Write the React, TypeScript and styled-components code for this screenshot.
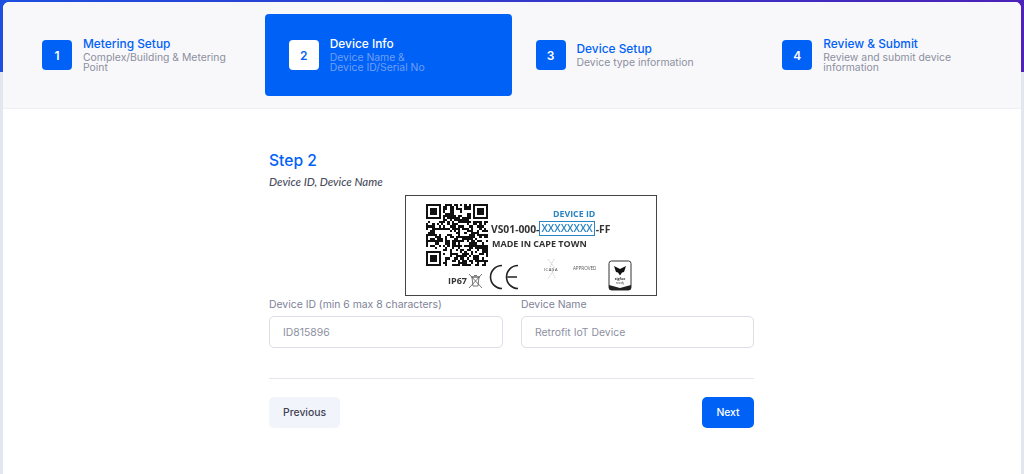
import styled, { createGlobalStyle } from "styled-components";

const GlobalStyle = createGlobalStyle`
    html, body {
        margin: 0;
        padding: 0;
        height: 100%;
        overflow: hidden;
    }

    body {
        background-color: #e4e6ef;
        font-family: "Inter", "Liberation Sans", sans-serif;
    }

    * {
        box-sizing: border-box;
    }
`;

const Page = styled.div`
    height: 474px;
    padding: 2px 3px 0;
    background: linear-gradient(90deg, #1d4fe0 0%, #4c22b8 100%) top / 100% 72px no-repeat;
`;

const Card = styled.div`
    height: 472px;
    border-radius: 6px 6px 0 0;
    overflow: hidden;
    background-color: #ffffff;
`;

const Stepper = styled.div`
    height: 107px;
    padding: 12px 16px 12px 15px;
    display: grid;
    grid-template-columns: repeat(4, 1fr);
    background-color: #f8f8fa;
    border-bottom: 1px solid #eef0f5;
`;

const Step = styled.div<{ $active?: boolean }>`
    display: flex;
    align-items: center;
    gap: 11px;
    padding-left: 24px;
    border-radius: 4px;
    background-color: ${props => (props.$active ? "#0061f7" : "transparent")};
`;

const StepNumber = styled.div<{ $active?: boolean }>`
    flex: none;
    width: 30px;
    height: 30px;
    border-radius: 4px;
    display: flex;
    align-items: center;
    justify-content: center;
    font-size: 12px;
    font-weight: 600;
    color: ${props => (props.$active ? "#0061f7" : "#ffffff")};
    background-color: ${props => (props.$active ? "#ffffff" : "#0061f7")};
`;

const StepText = styled.div`
    width: 160px;
    margin-top: -1px;
`;

const StepTitle = styled.div<{ $active?: boolean }>`
    font-size: 11.9px;
    font-weight: 500;
    line-height: 14px;
    margin-bottom: 2px;
    color: ${props => (props.$active ? "#ffffff" : "#0061f7")};
`;

const StepInfo = styled.div<{ $active?: boolean }>`
    font-size: 10.4px;
    line-height: 10px;
    white-space: pre-line;
    color: ${props => (props.$active ? "#6f9ff5" : "#8c8f9f")};
`;

const Form = styled.div`
    width: 485px;
    margin-left: 266px;
    padding-top: 42px;
`;

const Heading = styled.h2`
    margin: 0;
    font-size: 15.6px;
    font-weight: 500;
    line-height: 20px;
    color: #0061f7;
`;

const Hint = styled.div`
    margin-top: 5px;
    font-family: "Lato", "Liberation Sans", sans-serif;
    font-size: 11.4px;
    font-style: italic;
    font-weight: 500;
    line-height: 12px;
    color: #4a4d5c;
`;

const LabelPlate = styled.div`
    width: 252px;
    height: 101px;
    margin: 7px 0 0 136px;
    padding: 8px 0 0 20px;
    display: grid;
    grid-template-columns: 62px 1fr;
    grid-template-rows: 62px 1fr;
    column-gap: 3px;
    background-color: #ffffff;
    border: 1px solid #444444;
`;

const QrSvg = styled.svg`
    filter: blur(0.3px);
`;

const PrintLines = styled.div`
    display: flex;
    flex-direction: column;
    align-items: flex-start;
    padding-top: 4px;
    font-family: "Open Sans", "Liberation Sans", sans-serif;
    font-size: 10.3px;
    font-weight: 700;
    color: #333333;
    filter: blur(0.3px);
`;

const IdCaption = styled.div`
    margin-left: 62px;
    font-size: 8.8px;
    line-height: 13px;
    color: #2a85c4;
`;

const SerialLine = styled.div`
    display: flex;
    align-items: center;
    line-height: 14px;
    white-space: nowrap;
`;

const SerialBox = styled.span`
    padding: 0 1px;
    line-height: 13px;
    font-weight: 600;
    color: #2a85c4;
    border: 1px solid #2a85c4;
    margin-right: 1px;
`;

const MadeIn = styled.div`
    margin: 2px 0 0 1px;
    line-height: 12px;
    font-size: 9px;
`;

const MarksRow = styled.div`
    grid-column: 1 / 3;
    height: 28px;
    padding: 0 24px 0 2px;
    display: flex;
    align-items: flex-start;
    font-family: "Open Sans", "Liberation Sans", sans-serif;
    color: #333333;
    filter: blur(0.3px);
`;

const Rating = styled.span`
    margin: 9px 1px 0 20px;
    font-size: 9px;
    font-weight: 700;
    line-height: 11px;
`;

const BinSvg = styled.svg`
    margin-top: 7px;
`;

const CeSvg = styled.svg`
    margin: -3px 0 0 5px;
`;

const IcasaSvg = styled.svg`
    margin: -8px 0 0 19px;
`;

const Approved = styled.span`
    margin: -1px 0 0 10px;
    font-size: 4.6px;
    line-height: 6px;
    color: #555555;
`;

const SigfoxSvg = styled.svg`
    margin: -6px 0 0 auto;
`;

const Fields = styled.div`
    display: grid;
    grid-template-columns: 234px 233px;
    column-gap: 18px;
`;

const Field = styled.div`
    display: flex;
    flex-direction: column;
`;

const FieldLabel = styled.label`
    font-size: 10.4px;
    line-height: 14px;
    padding-top: 2px;
    color: #7e8299;
`;

const Input = styled.input`
    width: 100%;
    height: 32px;
    margin-top: 4px;
    padding: 0 13px;
    font-family: inherit;
    font-size: 10.4px;
    color: #7e8299;
    background-color: #ffffff;
    border: 1px solid #dcdee8;
    border-radius: 5px;
    outline: none;

    &::placeholder {
        color: #8c8f9f;
        opacity: 1;
    }
`;

const Divider = styled.div`
    margin-top: 30px;
    height: 1px;
    background-color: #e4e6ef;
`;

const Actions = styled.div`
    margin-top: 18px;
    display: flex;
    justify-content: space-between;
`;

const Button = styled.button<{ $primary?: boolean }>`
    height: 31px;
    min-width: 52px;
    padding: 0 14px;
    font-family: inherit;
    font-size: 10.4px;
    font-weight: 500;
    border: 0;
    border-radius: 5px;
    color: ${props => (props.$primary ? "#ffffff" : "#3f4254")};
    background-color: ${props => (props.$primary ? "#0061f7" : "#f1f4fb")};
`;

const steps = [
    { title: "Metering Setup", info: "Complex/Building & Metering Point" },
    { title: "Device Info", info: "Device Name &\nDevice ID/Serial No", active: true },
    { title: "Device Setup", info: "Device type information" },
    { title: "Review & Submit", info: "Review and submit device information" },
];

const QR_SIZE = 29;

// not a readable code, only the look of one
function qrCell(x: number, y: number) {
    const inFinder = (x < 8 && y < 8) || (x >= QR_SIZE - 8 && y < 8) || (x < 8 && y >= QR_SIZE - 8);
    if (inFinder) return false;
    const seed = Math.sin(x * 12.9898 + y * 78.233) * 43758.5453;
    return seed - Math.floor(seed) > 0.48;
}

function Finder({ x, y }: { x: number; y: number }) {
    return (
        <g>
            <rect x={x + 0.5} y={y + 0.5} width="6" height="6" fill="none" stroke="#111" strokeWidth="1" />
            <rect x={x + 2} y={y + 2} width="3" height="3" fill="#111" />
        </g>
    );
}

function QrCode() {
    const cells = [];
    for (let y = 0; y < QR_SIZE; y++) {
        for (let x = 0; x < QR_SIZE; x++) {
            if (qrCell(x, y)) cells.push(<rect key={`${x}-${y}`} x={x} y={y} width="1" height="1" fill="#111" />);
        }
    }
    return (
        <QrSvg width="62" height="62" viewBox={`0 0 ${QR_SIZE} ${QR_SIZE}`} shapeRendering="crispEdges">
            {cells}
            <Finder x={0} y={0} />
            <Finder x={QR_SIZE - 7} y={0} />
            <Finder x={0} y={QR_SIZE - 7} />
        </QrSvg>
    );
}

function BinMark() {
    return (
        <BinSvg width="15" height="16" viewBox="0 0 15 16" fill="none" stroke="#555" strokeWidth="0.8">
            <path d="M1 1l13 14M14 1L1 15" />
            <path d="M4 4h7l-1 9H5zM3 4h9M6 2.5h3" />
        </BinSvg>
    );
}

function CeMark() {
    return (
        <CeSvg width="32" height="28" viewBox="0 0 32 28" fill="none" stroke="#222" strokeWidth="1.6">
            <path d="M14 2.5a11 11 0 0 0 0 23" />
            <path d="M30 2.5a11 11 0 0 0 0 23M19.5 14H29" />
        </CeSvg>
    );
}

function IcasaMark() {
    return (
        <IcasaSvg width="24" height="22" viewBox="0 0 24 22">
            <path d="M9 1l6 8-1 4 -5 8M15 1l-4 8 2 4 3 7" fill="none" stroke="#888" strokeWidth="0.5" strokeDasharray="1 1" />
            <text x="12" y="12.5" textAnchor="middle" fontSize="4" letterSpacing="0.7" fill="#333">ICASA</text>
        </IcasaSvg>
    );
}

function SigfoxBadge() {
    return (
        <SigfoxSvg width="24" height="31" viewBox="0 0 24 31">
            <rect x="1" y="1" width="22" height="29" rx="2.5" fill="#fff" stroke="#333" strokeWidth="1" />
            <path d="M1 25l11 3 11-3v3a2 2 0 0 1-2 2H3a2 2 0 0 1-2-2z" fill="#222" />
            <path d="M6 6l6 3 6-3-2 6-2 .5-2 3-2-3-2-.5z" fill="#111" />
            <text x="12" y="20" textAnchor="middle" fontSize="3.6" fontWeight="700" fill="#333">sigfox</text>
            <text x="12" y="24" textAnchor="middle" fontSize="3.2" fill="#444">ready</text>
        </SigfoxSvg>
    );
}

function App() {
    return (
        <Page>
            <GlobalStyle />
            <Card>
                <Stepper>
                    {steps.map((step, i) => (
                        <Step key={step.title} $active={step.active}>
                            <StepNumber $active={step.active}>{i + 1}</StepNumber>
                            <StepText>
                                <StepTitle $active={step.active}>{step.title}</StepTitle>
                                <StepInfo $active={step.active}>{step.info}</StepInfo>
                            </StepText>
                        </Step>
                    ))}
                </Stepper>
                <Form>
                    <Heading>Step 2</Heading>
                    <Hint>Device ID, Device Name</Hint>
                    <LabelPlate>
                        <QrCode />
                        <PrintLines>
                            <IdCaption>DEVICE ID</IdCaption>
                            <SerialLine>
                                VS01-000-<SerialBox>XXXXXXXX</SerialBox>-FF
                            </SerialLine>
                            <MadeIn>MADE IN CAPE TOWN</MadeIn>
                        </PrintLines>
                        <MarksRow>
                            <Rating>IP67</Rating>
                            <BinMark />
                            <CeMark />
                            <IcasaMark />
                            <Approved>APPROVED</Approved>
                            <SigfoxBadge />
                        </MarksRow>
                    </LabelPlate>
                    <Fields>
                        <Field>
                            <FieldLabel>Device ID (min 6 max 8 characters)</FieldLabel>
                            <Input placeholder="ID815896" />
                        </Field>
                        <Field>
                            <FieldLabel>Device Name</FieldLabel>
                            <Input placeholder="Retrofit IoT Device" />
                        </Field>
                    </Fields>
                    <Divider />
                    <Actions>
                        <Button>Previous</Button>
                        <Button $primary>Next</Button>
                    </Actions>
                </Form>
            </Card>
        </Page>
    );
}

export default App;
